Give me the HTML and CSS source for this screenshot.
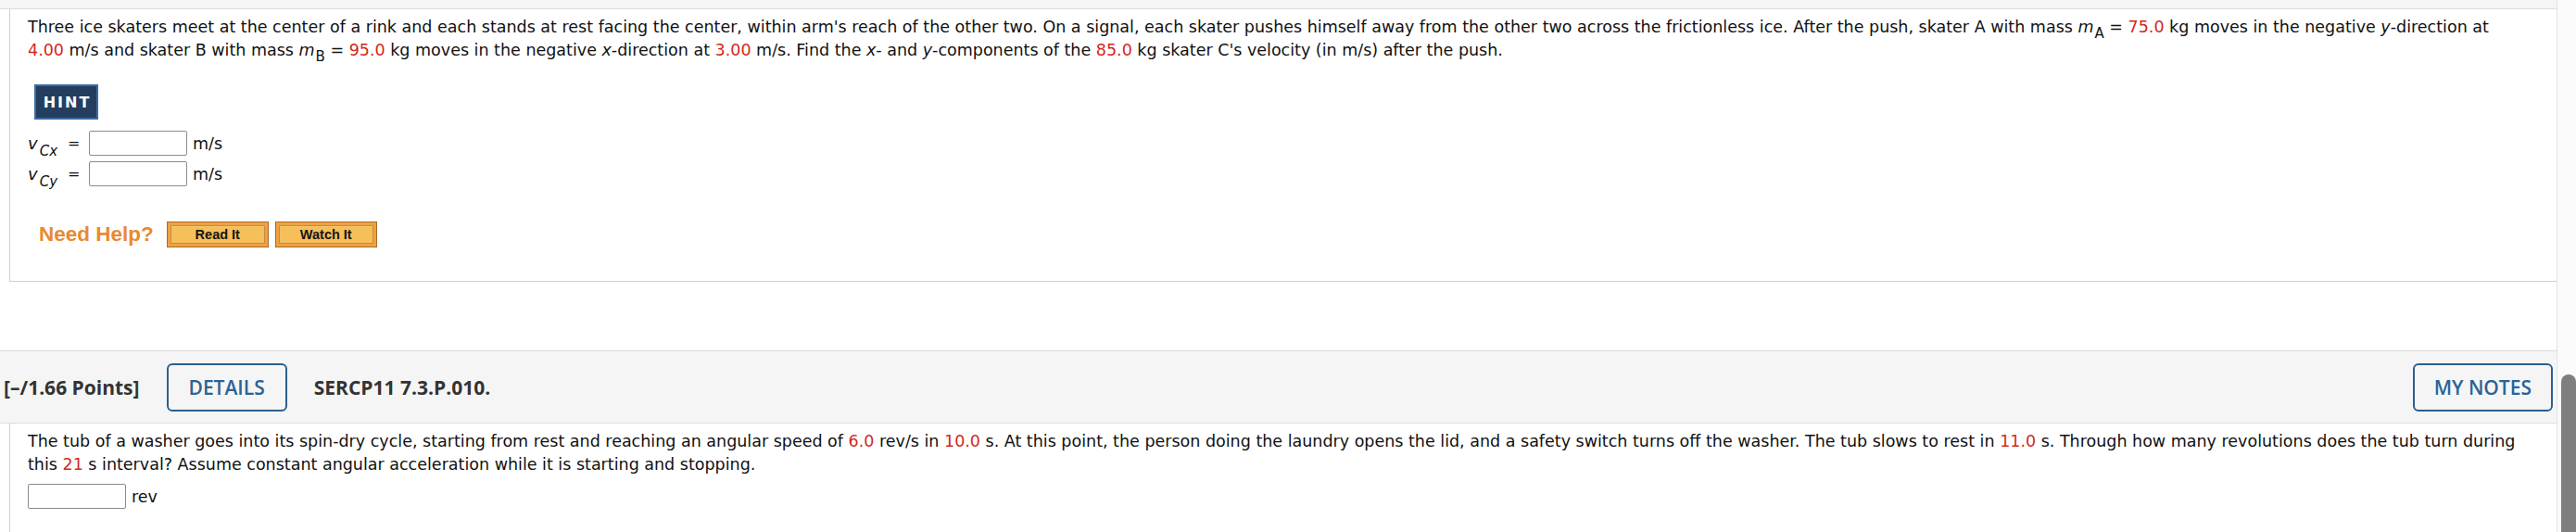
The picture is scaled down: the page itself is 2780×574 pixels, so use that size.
FILE: index.html
```html
<!DOCTYPE html>
<html lang="en">
<head>
<meta charset="utf-8">
<title>Assignment</title>
<link rel="stylesheet" href="styles.css">
</head>
<body>
<div class="window">
  <div class="page">
    <div class="prev-footer"></div>

    <section class="question q1">
      <p class="qtext">Three ice skaters meet at the center of a rink and each stands at rest facing the center, within arm's reach of the other two. On a signal, each skater pushes himself away from the other two across the frictionless ice. After the push, skater A with mass <span class="var">m</span><span class="sub">A</span> = <span class="num">75.0</span> kg moves in the negative <span class="var">y</span>-direction at<br><span class="num">4.00</span> m/s and skater B with mass <span class="var">m</span><span class="sub">B</span> = <span class="num">95.0</span> kg moves in the negative <span class="var">x</span>-direction at <span class="num">3.00</span> m/s. Find the <span class="var">x</span>- and <span class="var">y</span>-components of the <span class="num">85.0</span> kg skater C's velocity (in m/s) after the push.</p>

      <button class="hint" type="button">HINT</button>

      <div class="answers">
        <div class="ans-row">
          <span class="lbl"><span class="var">v</span><span class="lsub">Cx</span></span>
          <span class="eq">=</span>
          <input class="blank" type="text">
          <span class="unit">m/s</span>
        </div>
        <div class="ans-row">
          <span class="lbl"><span class="var">v</span><span class="lsub">Cy</span></span>
          <span class="eq">=</span>
          <input class="blank" type="text">
          <span class="unit">m/s</span>
        </div>
      </div>

      <div class="help">
        <span class="need">Need Help?</span>
        <button class="helpbtn" type="button">Read It</button>
        <button class="helpbtn" type="button">Watch It</button>
      </div>
    </section>

    <div class="qhead">
      <span class="points">[–/1.66 Points]</span>
      <button class="outline" type="button">DETAILS</button>
      <span class="qid">SERCP11 7.3.P.010.</span>
      <button class="outline mynotes" type="button">MY NOTES</button>
    </div>

    <section class="question q2">
      <p class="qtext">The tub of a washer goes into its spin-dry cycle, starting from rest and reaching an angular speed of <span class="num">6.0</span> rev/s in <span class="num">10.0</span> s. At this point, the person doing the laundry opens the lid, and a safety switch turns off the washer. The tub slows to rest in <span class="num">11.0</span> s. Through how many revolutions does the tub turn during<br>this <span class="num">21</span> s interval? Assume constant angular acceleration while it is starting and stopping.</p>
      <div class="single">
        <input class="blank" type="text">
        <span class="unit">rev</span>
      </div>
    </section>
  </div>

  <div class="scrollbar"><div class="thumb"></div></div>
</div>
</body>
</html>
```

FILE: styles.css
```css
html, body {
  margin: 0;
  padding: 0;
  background: #fff;
}

body {
  font-family: "DejaVu Sans", Verdana, sans-serif;
  color: #111;
}

.window {
  display: flex;
  height: 574px;
  overflow: hidden;
}

.page {
  flex: 1;
  min-width: 0;
}

.prev-footer {
  height: 9px;
  background: #f5f5f5;
  border-bottom: 1px solid #dcdcdc;
}

.question {
  margin-left: 10px;
  border-left: 1px solid #cfcfcf;
  padding: 7px 19px 36px 19px;
}

.q1 {
  border-bottom: 1px solid #cfcfcf;
}

.qtext {
  margin: 0;
  font-size: 17.5px;
  line-height: 25px;
  white-space: nowrap;
}

.num {
  color: #d2291c;
}

.var {
  font-style: italic;
}

.sub {
  font-size: 15px;
  line-height: 0;
  vertical-align: -6px;
  margin-left: 1px;
}

.hint {
  display: block;
  margin: 24px 0 0 7px;
  width: 69px;
  height: 38px;
  padding: 0;
  background: #243e5f;
  border: 2px solid #3b6ca2;
  color: #fff;
  font-family: "DejaVu Sans", Verdana, sans-serif;
  font-weight: bold;
  font-size: 16px;
  letter-spacing: 2px;
  text-indent: 2px;
}

.answers {
  margin-top: 12px;
  display: flex;
  flex-direction: column;
  gap: 6px;
}

.ans-row {
  display: grid;
  grid-template-columns: 43px 23px 106px auto;
  align-items: center;
  height: 27px;
  font-size: 17.5px;
}

.lbl {
  white-space: nowrap;
}

.lbl .var {
  font-size: 18px;
}

.lsub {
  font-style: italic;
  font-size: 15px;
  vertical-align: -7px;
  line-height: 0;
  margin-left: 2px;
}

.eq {
  font-size: 16px;
}

.blank {
  box-sizing: border-box;
  width: 106px;
  height: 27px;
  margin: 0;
  padding: 0 4px;
  border: 1px solid #8c8c8c;
  border-radius: 2px;
  background: #fff;
  font: 16px "DejaVu Sans", sans-serif;
}

.unit {
  margin-left: 6px;
  font-size: 17.5px;
}

.help {
  margin-top: 38px;
  display: flex;
  align-items: center;
}

.need {
  margin: 0 14px 0 12px;
  font-family: "Liberation Sans", Arial, sans-serif;
  font-weight: bold;
  font-size: 22.5px;
  color: #e88a2f;
}

.helpbtn {
  box-sizing: border-box;
  width: 110px;
  height: 28px;
  margin-right: 7px;
  padding: 0;
  border: 1px solid #a96b2a;
  background: #f5bf5a;
  box-shadow: inset 0 0 0 3px #eea144, inset 0 0 0 4px #c98b3b, inset 0 5px 0 0 #f7c96c;
  font-family: "Liberation Sans", Arial, sans-serif;
  font-weight: bold;
  font-size: 14.5px;
  color: #151515;
}

.qhead {
  margin-top: 74px;
  height: 77px;
  display: flex;
  align-items: center;
  gap: 29px;
  padding: 0 4px;
  background: #f5f5f5;
  border-top: 1px solid #dcdcdc;
  border-bottom: 1px solid #dcdcdc;
  font-family: "Open Sans", "Noto Sans", sans-serif;
}

.points,
.qid {
  font-size: 21px;
  font-weight: 700;
  color: #333;
}

.outline {
  box-sizing: border-box;
  height: 52px;
  padding: 0 22px;
  background: transparent;
  border: 2px solid #2c5f8f;
  border-radius: 6px;
  color: #2a6496;
  font-family: "Open Sans", "Noto Sans", sans-serif;
  font-size: 21px;
  font-weight: 600;
}

.mynotes {
  margin-left: auto;
  padding: 0 21px;
}

.q2 {
  padding-bottom: 40px;
}

.single {
  margin-top: 8px;
  display: flex;
  align-items: center;
}

.scrollbar {
  width: 20px;
  flex: none;
  background: #fafafa;
  border-left: 1px solid #e3e3e3;
}

.thumb {
  margin: 404px 0 0 4px;
  height: 200px;
  background: #7f7f7f;
  border-radius: 8px 8px 0 0;
}
```
